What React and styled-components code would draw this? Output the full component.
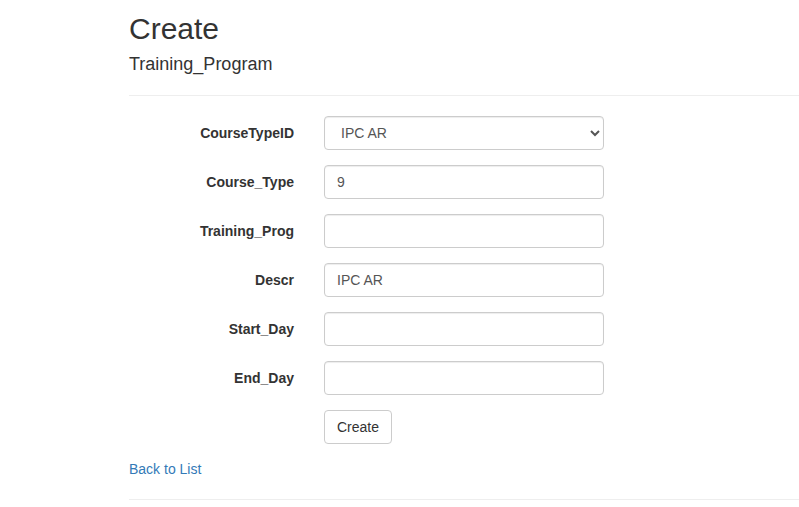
import React from 'react';
import styled, { createGlobalStyle } from 'styled-components';

const GlobalStyle = createGlobalStyle`
  html, body {
    margin: 0;
    padding: 0;
    background: #fff;
  }
  body {
    font-family: "Liberation Sans", Arial, Helvetica, sans-serif;
    font-size: 14px;
    line-height: 1.42857143;
    color: #333;
  }
  * {
    box-sizing: border-box;
  }
`;

const Page = styled.div`
  padding: 12px 0 0 129px;
`;

const Title = styled.h2`
  margin: 0 0 10px;
  font-size: 30px;
  font-weight: 500;
  line-height: 1.1;
`;

const Subtitle = styled.h4`
  margin: 10px 0 10px;
  font-size: 18px;
  font-weight: 500;
  line-height: 1.1;
`;

const Rule = styled.hr`
  margin: 20px 0;
  border: 0;
  border-top: 1px solid #eee;
  height: 0;
`;

const Form = styled.form`
  display: grid;
  grid-template-columns: 165px 280px;
  column-gap: 30px;
  row-gap: 15px;
  align-items: start;
`;

const Label = styled.label`
  padding-top: 7px;
  font-weight: 700;
  text-align: right;
  margin: 0;
`;

const fieldStyles = `
  display: block;
  width: 280px;
  height: 34px;
  padding: 6px 12px;
  font-family: "Liberation Sans", Arial, Helvetica, sans-serif;
  font-size: 14px;
  line-height: 1.42857143;
  color: #555;
  background-color: #fff;
  border: 1px solid #ccc;
  border-radius: 4px;
  box-shadow: inset 0 1px 1px rgba(0, 0, 0, 0.075);
  margin: 0;
`;

const Input = styled.input`
  ${fieldStyles}
`;

const Select = styled.select`
  ${fieldStyles}
  padding-left: 12px;
`;

const ButtonCell = styled.div`
  grid-column: 2;
`;

const Button = styled.button`
  display: inline-block;
  padding: 6px 12px;
  font-family: "Liberation Sans", Arial, Helvetica, sans-serif;
  font-size: 14px;
  line-height: 1.42857143;
  color: #333;
  background-color: #fff;
  border: 1px solid #ccc;
  border-radius: 4px;
  cursor: pointer;
`;

const Footer = styled.div`
  margin-top: 15px;
`;

const Link = styled.a`
  color: #337ab7;
  text-decoration: none;
`;

const fields = [
  { label: 'Course_Type', value: '9' },
  { label: 'Training_Prog', value: '' },
  { label: 'Descr', value: 'IPC AR' },
  { label: 'Start_Day', value: '' },
  { label: 'End_Day', value: '' },
];

const App = () => (
  <Page>
    <GlobalStyle />
    <Title>Create</Title>
    <Subtitle>Training_Program</Subtitle>
    <Rule />
    <Form onSubmit={(e) => e.preventDefault()}>
      <Label htmlFor="CourseTypeID">CourseTypeID</Label>
      <Select id="CourseTypeID" defaultValue="IPC AR">
        <option>IPC AR</option>
      </Select>
      {fields.map((f) => (
        <React.Fragment key={f.label}>
          <Label htmlFor={f.label}>{f.label}</Label>
          <Input id={f.label} type="text" defaultValue={f.value} />
        </React.Fragment>
      ))}
      <ButtonCell>
        <Button type="submit">Create</Button>
      </ButtonCell>
    </Form>
    <Footer>
      <Link href="#">Back to List</Link>
    </Footer>
    <Rule />
  </Page>
);

export default App;
